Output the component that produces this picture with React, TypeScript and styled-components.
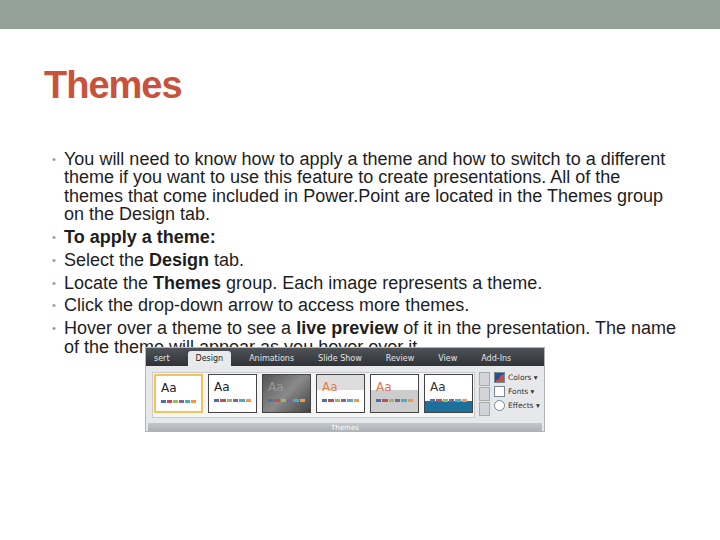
import styled, { createGlobalStyle } from 'styled-components';

const Global = createGlobalStyle`
  body { margin: 0; background: #fff; font-family: "Liberation Sans", Arial, sans-serif; }
`;

const Slide = styled.div`
  position: relative;
  width: 720px;
  height: 540px;
  overflow: hidden;
`;
const TopBar = styled.div`
  height: 29px;
  background: #93a199;
`;
const Title = styled.h1`
  margin: 34px 0 0 44px;
  font-size: 38px;
  font-weight: bold;
  color: #c9523c;
  letter-spacing: -1px;
  line-height: 44px;
`;
const List = styled.ul`
  list-style: none;
  margin: 43px 36px 0 52px;
  padding: 0;
  font-size: 18px;
  line-height: 18.3px;
  color: #1e1e1e;
`;
const Item = styled.li`
  position: relative;
  padding-left: 12px;
  margin-bottom: 4.6px;
  &::before {
    content: '•';
    position: absolute;
    left: 0;
    top: 0;
    font-size: 11px;
    color: #9a9a9a;
  }
`;

/* ribbon screenshot */
const Ribbon = styled.div`
  position: absolute;
  left: 145px;
  top: 347px;
  width: 400px;
  height: 85px;
  background: #e7e8ea;
  border: 1px solid #b0b3b8;
  box-sizing: border-box;
  font-family: "DejaVu Sans", sans-serif;
  overflow: hidden;
`;
const Tabs = styled.div`
  display: flex;
  align-items: flex-end;
  height: 18px;
  background: linear-gradient(#4f5257, #2f3236);
  padding-left: 2px;
  gap: 12px;
  font-size: 8px;
  color: #e4e6e9;
  white-space: nowrap;
`;
const Tab = styled.div<{ $active?: boolean }>`
  padding: 0 6px 3px;
  ${p => p.$active && `
    background: #e9eaec;
    color: #222;
    padding: 3px 8px 3px;
    border-radius: 3px 3px 0 0;
  `}
`;
const Body = styled.div`
  display: flex;
  padding: 6px 4px 0 6px;
  gap: 4px;
  height: 46px;
`;
const Gallery = styled.div`
  display: flex;
  gap: 5px;
  background: #f4f5f6;
  border: 1px solid #c8cacd;
  padding: 1px;
`;
const Thumb = styled.div<{ $bg: string; $sel?: boolean; $fg: string }>`
  width: 49px;
  height: 39px;
  box-sizing: border-box;
  background: ${p => p.$bg};
  border: ${p => (p.$sel ? '2px solid #f0c35b' : '1px solid #444')};
  padding: 5px 5px 0;
  font-family: "DejaVu Sans", sans-serif;
  font-size: 12px;
  color: ${p => p.$fg};
  display: flex;
  flex-direction: column;
  gap: 5px;
`;
const Swatches = styled.div`
  display: flex;
  gap: 1px;
  & span { width: 6px; height: 3px; }
`;
const Scroll = styled.div`
  display: flex;
  flex-direction: column;
  gap: 1px;
  & div { width: 9px; height: 12px; background: #d2d4d7; border: 1px solid #aaa; }
`;
const Side = styled.div`
  display: flex;
  flex-direction: column;
  gap: 3px;
  font-size: 7.5px;
  color: #333;
  & div { display: flex; align-items: center; gap: 3px; }
  & i { display: inline-block; width: 9px; height: 9px; border: 1px solid #789; background: #fff; }
`;
const Footer = styled.div`
  margin: 5px 2px 0;
  height: 10px;
  background: linear-gradient(#c3c6ca, #a9adb2);
  text-align: center;
  font-size: 7px;
  color: #fff;
  line-height: 10px;
`;

const sw = ['#4f6fa6', '#c0504d', '#9bbb59', '#8064a2', '#4bacc6', '#f79646'];
const themes = [
  { bg: '#fff', fg: '#222', sel: true },
  { bg: '#fff', fg: '#222' },
  { bg: 'linear-gradient(135deg,#555,#8a8a8a,#444)', fg: '#999' },
  { bg: 'linear-gradient(#ddd 40%,#fff 40%)', fg: '#e87a45' },
  { bg: 'linear-gradient(#fff 40%,#ccc 40%)', fg: '#d9735a' },
  { bg: 'linear-gradient(#fff 70%,#1d6f9c 70%)', fg: '#333' },
];

export default function App() {
  return (
    <Slide>
      <Global />
      <TopBar />
      <Title>Themes</Title>
      <List>
        <Item>You will need to know how to apply a theme and how to switch to a different theme if you want to use this feature to create presentations. All of the themes that come included in Power.Point are located in the Themes group on the Design tab.</Item>
        <Item><b>To apply a theme:</b></Item>
        <Item>Select the <b>Design</b> tab.</Item>
        <Item>Locate the <b>Themes</b> group. Each image represents a theme.</Item>
        <Item>Click the drop-down arrow to access more themes.</Item>
        <Item>Hover over a theme to see a <b>live preview</b> of it in the presentation. The name of the theme will appear as you hover over it.</Item>
      </List>
      <Ribbon>
        <Tabs>
          <Tab>sert</Tab>
          <Tab $active>Design</Tab>
          <Tab>Animations</Tab>
          <Tab>Slide Show</Tab>
          <Tab>Review</Tab>
          <Tab>View</Tab>
          <Tab>Add-Ins</Tab>
        </Tabs>
        <Body>
          <Gallery>
            {themes.map((t, i) => (
              <Thumb key={i} $bg={t.bg} $fg={t.fg} $sel={t.sel}>
                Aa
                <Swatches>{sw.map(c => <span key={c} style={{ background: c }} />)}</Swatches>
              </Thumb>
            ))}
          </Gallery>
          <Scroll><div /><div /><div /></Scroll>
          <Side>
            <div><i style={{ background: 'linear-gradient(135deg,#2b4f8f 50%,#c0504d 50%)' }} />Colors ▾</div>
            <div><i />Fonts ▾</div>
            <div><i style={{ borderRadius: '50%' }} />Effects ▾</div>
          </Side>
        </Body>
        <Footer>Themes</Footer>
      </Ribbon>
    </Slide>
  );
}
